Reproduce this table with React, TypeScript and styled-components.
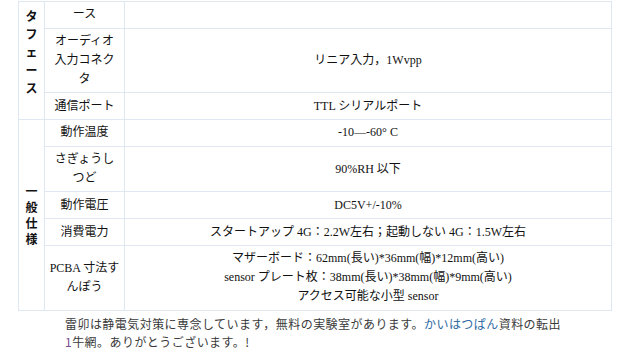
import styled, { createGlobalStyle } from "styled-components";

const GlobalStyle = createGlobalStyle`
  body {
    margin: 0;
    background: #ffffff;
    font-family: "Liberation Serif", "Noto Sans CJK JP", serif;
  }
`;

const Page = styled.div`
  padding: 1px 0 0 18px;
  width: 594px;
`;

const SpecTable = styled.table`
  width: 594px;
  border-collapse: collapse;
  table-layout: fixed;
  font-size: 12px;
  color: #111;
`;

const Cell = styled.td`
  border: 1px solid #dfe8f1;
  padding: 3.4px 6px 3.3px;
  line-height: 19px;
  text-align: center;
  vertical-align: middle;
`;

const GroupCell = styled(Cell)<{ $top?: boolean; $lh: number }>`
  padding: ${(p) => (p.$top ? "5px 6px 0" : "0 6px")};
  vertical-align: ${(p) => (p.$top ? "top" : "middle")};
  font-family: "Noto Sans CJK JP", sans-serif;
  font-weight: 700;
  font-size: 12px;
  line-height: ${(p) => p.$lh}px;
  word-break: break-all;
`;

const LabelCell = styled(Cell)`
  padding-left: 3px;
  padding-right: 3px;
  white-space: nowrap;
  font-family: "Liberation Serif", "Noto Sans CJK JP", serif;
`;

const ValueCell = styled(Cell)`
  font-family: "Liberation Serif", "Noto Sans CJK JP", serif;
`;

const Note = styled.p`
  margin: 4px 0 0 47px;
  width: 520px;
  font-family: "Noto Sans CJK JP", sans-serif;
  font-size: 12px;
  letter-spacing: 0.45px;
  line-height: 18px;
  color: #3a3a3a;
`;

const Link = styled.span`
  color: #2d6aa3;
`;

const Num = styled.span`
  color: #7a4a8c;
`;

type Row = { label: React.ReactNode; value: React.ReactNode };

const interfaceRows: Row[] = [
  { label: "ース", value: "" },
  {
    label: (
      <>
        オーディオ
        <br />
        入力コネク
        <br />タ
      </>
    ),
    value: "リニア入力，1Wvpp",
  },
  { label: "通信ポート", value: "TTL シリアルポート" },
];

const generalRows: Row[] = [
  { label: "動作温度", value: "-10—-60° C" },
  {
    label: (
      <>
        さぎょうし
        <br />
        つど
      </>
    ),
    value: "90%RH 以下",
  },
  { label: "動作電圧", value: "DC5V+/-10%" },
  {
    label: "消費電力",
    value: "スタートアップ 4G：2.2W左右；起動しない 4G：1.5W左右",
  },
  {
    label: (
      <>
        PCBA 寸法す
        <br />
        んぽう
      </>
    ),
    value: (
      <>
        マザーボード：62mm(長い)*36mm(幅)*12mm(高い)
        <br />
        sensor プレート枚：38mm(長い)*38mm(幅)*9mm(高い)
        <br />
        アクセス可能な小型 sensor
      </>
    ),
  },
];

export default function App() {
  return (
    <Page>
      <GlobalStyle />
      <SpecTable>
        <colgroup>
          <col style={{ width: 26 }} />
          <col style={{ width: 80 }} />
          <col />
        </colgroup>
        <tbody>
          {interfaceRows.map((row, i) => (
            <tr key={"i" + i}>
              {i === 0 && (
                <GroupCell rowSpan={interfaceRows.length} $top $lh={18}>
                  タフェース
                </GroupCell>
              )}
              <LabelCell>{row.label}</LabelCell>
              <ValueCell>{row.value}</ValueCell>
            </tr>
          ))}
          {generalRows.map((row, i) => (
            <tr key={"g" + i}>
              {i === 0 && (
                <GroupCell rowSpan={generalRows.length} $lh={16}>
                  一般仕様
                </GroupCell>
              )}
              <LabelCell>{row.label}</LabelCell>
              <ValueCell>{row.value}</ValueCell>
            </tr>
          ))}
        </tbody>
      </SpecTable>
      <Note>
        雷卯は静電気対策に専念しています，無料の実験室があります。
        <Link>かいはつぱん</Link>資料の転出
        <br />
        <Num>1</Num>牛網。ありがとうございます。!
      </Note>
    </Page>
  );
}
